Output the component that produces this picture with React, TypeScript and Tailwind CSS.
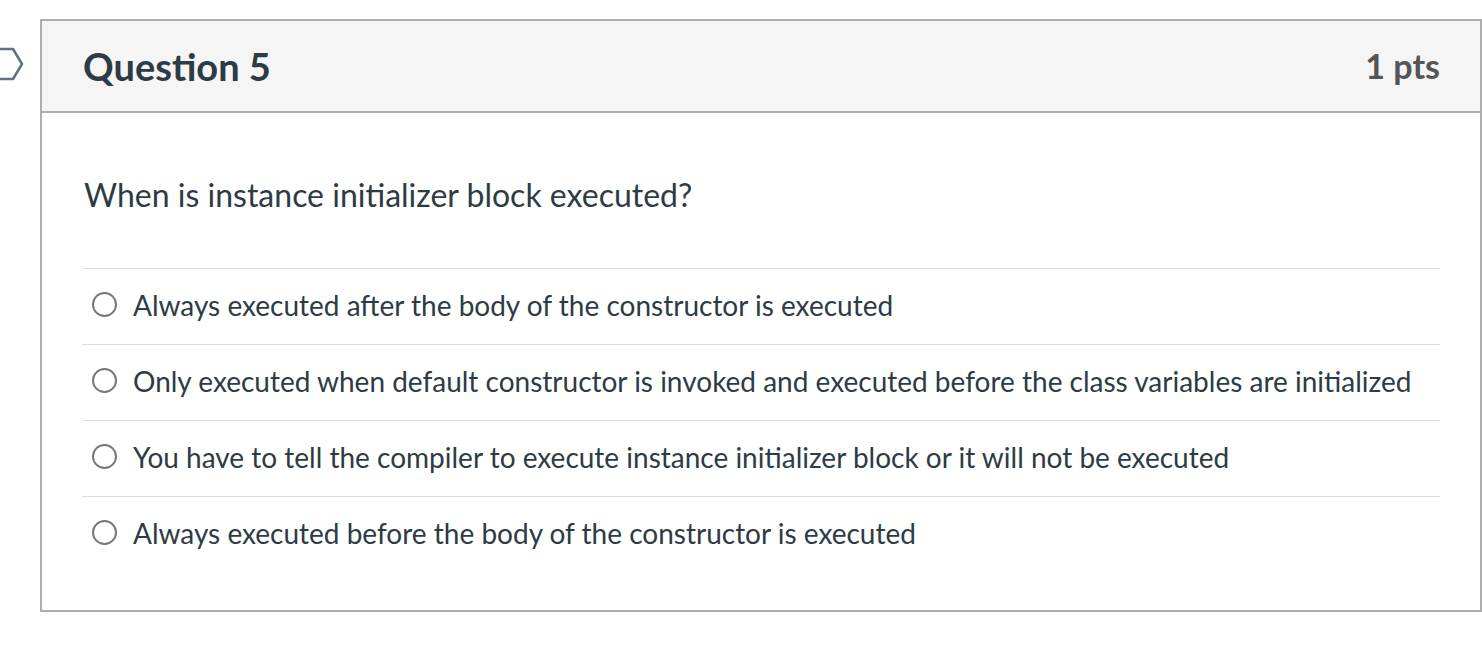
const ANSWERS = [
  "Always executed after the body of the constructor is executed",
  "Only executed when default constructor is invoked and executed before the class variables are initialized",
  "You have to tell the compiler to execute instance initializer block or it will not be executed",
  "Always executed before the body of the constructor is executed",
];

function FlagIcon() {
  return (
    <svg width="40" height="40" viewBox="0 0 40 40" className="shrink-0 mt-[27px]">
      <path
        d="M -6 3 L 13 3 L 22 18 L 13 33 L -6 33 Z"
        fill="none"
        stroke="#5f7284"
        strokeWidth="2.5"
        strokeLinejoin="round"
      />
    </svg>
  );
}

export default function App() {
  return (
    <div
      className="flex min-h-[656px] bg-white pt-[19px] text-[#2d3b45]"
      style={{ fontFamily: "Lato, 'Noto Sans', sans-serif" }}
    >
      <FlagIcon />
      <div className="flex h-[593px] flex-1 flex-col border-2 border-[#adadad]">
        <div className="flex h-[92px] items-center justify-between border-b-2 border-[#adadad] bg-[#f5f5f5] pl-[41px] pr-[40px]">
          <h2 className="text-[38px] font-bold leading-none">Question 5</h2>
          <span className="text-[34px] font-bold leading-none text-[#555]">1 pts</span>
        </div>
        <div className="px-[40px] pt-[61px]">
          <p className="pl-[2px] text-[32px] leading-[42px]">When is instance initializer block executed?</p>
          <div className="mt-[52px]">
            {ANSWERS.map((a, i) => (
              <div
                key={i}
                className="flex h-[76px] items-center gap-[16px] border-t border-[#dcdcdc] pb-[4px] pl-[10px]"
              >
                <span className="h-[25px] w-[25px] shrink-0 rounded-full border-2 border-[#777]" />
                <span className="text-[28px] leading-none">{a}</span>
              </div>
            ))}
          </div>
        </div>
      </div>
    </div>
  );
}
